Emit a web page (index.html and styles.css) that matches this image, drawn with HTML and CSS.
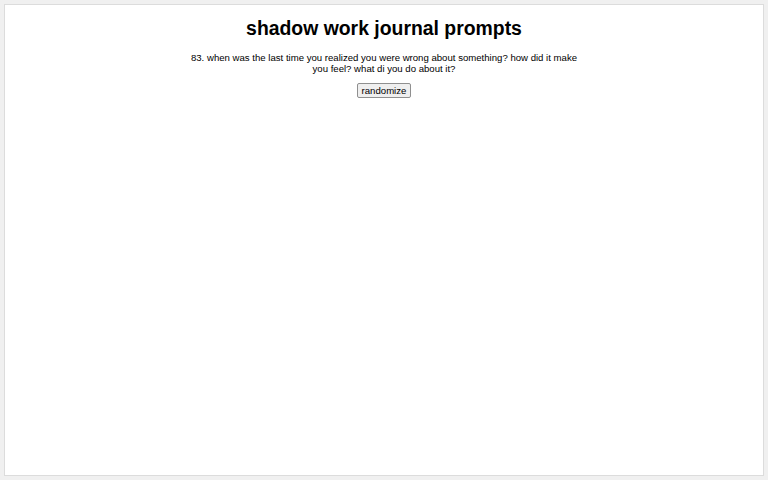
FILE: index.html
```html
<!DOCTYPE html>
<html>
<head>
<meta charset="utf-8">
<link rel="stylesheet" href="styles.css">
<title>shadow work journal prompts</title>
</head>
<body>
<main class="page">
  <h1 class="title">shadow work journal prompts</h1>
  <p class="prompt">83. when was the last time you realized you were wrong about something? how did it make you feel? what di you do about it?</p>
  <button class="shuffle" type="button">randomize</button>
</main>
</body>
</html>
```
FILE: styles.css
```css
html, body {
  margin: 0;
  height: 100%;
}
body {
  background: #f0f0f0;
  padding: 4px;
  box-sizing: border-box;
  font-family: "Liberation Sans", Arial, sans-serif;
  color: #000;
}
.page {
  background: #fff;
  border: 1px solid #dcdcdc;
  height: 100%;
  box-sizing: border-box;
  display: flex;
  flex-direction: column;
  align-items: center;
  padding-top: 12px;
}
.title {
  font-size: 19.4px;
  font-weight: bold;
  margin: 0;
  line-height: 22px;
}
.prompt {
  font-size: 9.6px;
  line-height: 11px;
  max-width: 392px;
  text-align: center;
  margin: 13px 0 0;
}
.shuffle {
  margin-top: 9px;
  font-family: "Liberation Sans", Arial, sans-serif;
  font-size: 9.6px;
  line-height: 11px;
  padding: 1px 4px;
  background: #efefef;
  border: 1px solid #8f8f8f;
  border-radius: 2px;
  color: #000;
}
```
